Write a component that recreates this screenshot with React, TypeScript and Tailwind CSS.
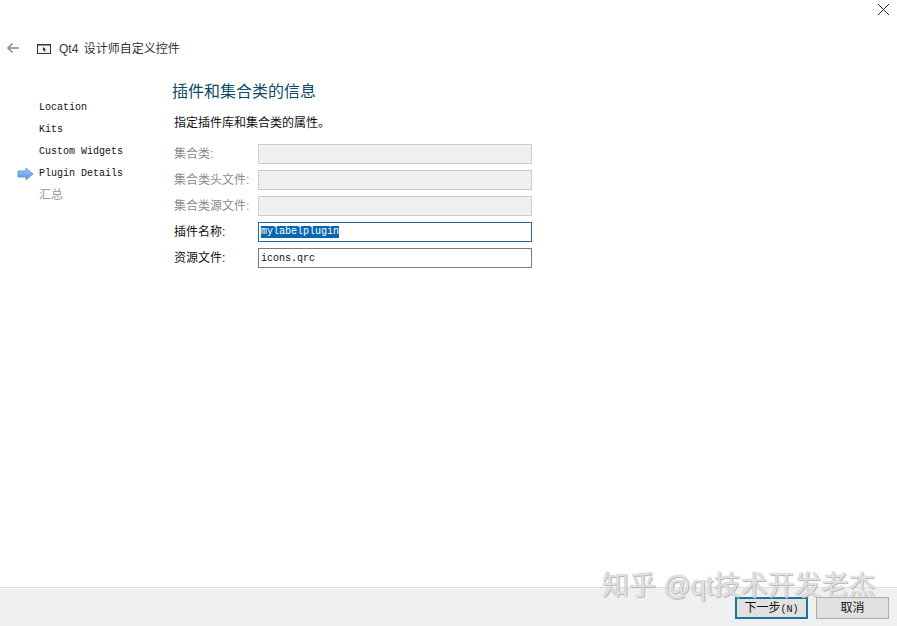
const cjk = "font-['Liberation_Sans','Noto_Sans_CJK_SC',sans-serif]";

const steps = [
  { label: "Location" },
  { label: "Kits" },
  { label: "Custom Widgets" },
  { label: "Plugin Details", active: true },
  { label: "汇总", muted: true },
];

const fields = [
  { label: "集合类:", disabled: true },
  { label: "集合类头文件:", disabled: true },
  { label: "集合类源文件:", disabled: true },
  { label: "插件名称:", value: "mylabelplugin", focused: true },
  { label: "资源文件:", value: "icons.qrc" },
];

const StepArrow = () => (
  <svg width="17" height="14" viewBox="0 0 17 14" className="absolute left-[-22px] top-[0px]">
    <defs>
      <linearGradient id="arrowFill" x1="0" y1="0" x2="0" y2="1">
        <stop offset="0" stopColor="#a9c9f0" />
        <stop offset="1" stopColor="#4f8fdc" />
      </linearGradient>
    </defs>
    <path d="M1 4h8V1l7 6-7 6v-3H1z" fill="url(#arrowFill)" stroke="#6f9fd8" strokeWidth="1" />
  </svg>
);

const Field = ({ label, value, disabled, focused }: { label: string; value?: string; disabled?: boolean; focused?: boolean }) => (
  <div className="flex items-center h-5">
    <span className={`w-[85px] pl-px text-xs ${disabled ? "text-[#8c8c8c]" : "text-[#111]"}`}>{label}</span>
    <div
      className={`w-[274px] h-5 border flex items-center pl-0.5 font-['Liberation_Mono',monospace] text-[10px] ${
        disabled ? "border-[#cccccc] bg-[#f0f0f0]" : focused ? "border-[#1c6f8f] bg-white" : "border-[#7a7a7a] bg-white"
      }`}
    >
      {focused ? <span className="bg-[#0a66b0] text-white h-3 leading-3">{value}</span> : value}
    </div>
  </div>
);

export default function App() {
  return (
    <div className={`w-[897px] h-[626px] flex flex-col bg-white text-[#111] overflow-hidden relative ${cjk}`}>
      <div className="h-10 flex justify-end items-start pt-[3px] pr-[7px]">
        <svg width="13" height="13" viewBox="0 0 13 13" fill="none" stroke="#222" strokeWidth="1">
          <path d="M1 1l11 11M12 1L1 12" />
        </svg>
      </div>

      <div className="h-[18px] flex items-center pl-1.5">
        <svg width="14" height="12" viewBox="0 0 14 12" fill="none" stroke="#8a8a8a" strokeWidth="1.6" className="-mt-0.5">
          <path d="M13 6H2M6.5 1.5L2 6l4.5 4.5" />
        </svg>
        <svg width="15" height="12" viewBox="0 0 15 12" className="ml-[17px]">
          <rect x="0.5" y="1.5" width="13" height="9" fill="#f4f4f4" stroke="#333" />
          <rect x="0.5" y="1" width="13" height="1.5" fill="#333" />
          <path d="M6 4l3 2.5-1.3.2.8 1.6-.8.4-.8-1.6L6 8z" fill="#222" />
        </svg>
        <span className="ml-[7px] text-xs text-[#333]">
          <span className="mr-[2px]">Qt4</span> 设计师自定义控件
        </span>
      </div>

      <div className="flex flex-1 min-h-0">
        <div className="w-[172px] pl-[39px] pt-[43px] flex flex-col gap-2">
          {steps.map((step) => (
            <div
              key={step.label}
              className={`relative h-3.5 whitespace-nowrap ${
                step.muted
                  ? "text-xs leading-3 text-[#999]"
                  : "text-[10px] leading-[14px] font-['Liberation_Mono',monospace] text-[#111]"
              }`}
            >
              {step.active && <StepArrow />}
              {step.label}
            </div>
          ))}
        </div>

        <div className="flex-1 pt-6">
          <div className="text-base leading-[20px] text-[#0f4a68]">插件和集合类的信息</div>
          <div className="ml-0.5 mt-[13px] text-xs leading-4">指定插件库和集合类的属性。</div>
          <div className="ml-[1px] mt-[13px] flex flex-col gap-1.5">
            {fields.map((field) => (
              <Field key={field.label} {...field} />
            ))}
          </div>
        </div>
      </div>

      <div className="h-[39px] bg-[#f0f0f0] border-t border-[#dfdfdf] flex justify-end items-start pt-[9px] pr-2 gap-2">
        <button className="w-[73px] h-[22px] border-2 border-[#1a7596] bg-[#e1e1e1] text-xs text-[#111]">
          下一步<span className="font-['Liberation_Mono',monospace] text-[10px]">(N)</span>
        </button>
        <button className="w-[73px] h-[22px] border border-[#adadad] bg-[#e1e1e1] text-xs text-[#111]">取消</button>
      </div>

      <div className="absolute left-[602px] top-[570px] text-[27px] leading-[32px] whitespace-nowrap text-white/70 [text-shadow:0_0_1px_#999,1px_1px_1px_#bbb]">
        知乎 @qt技术开发老杰
      </div>
    </div>
  );
}
